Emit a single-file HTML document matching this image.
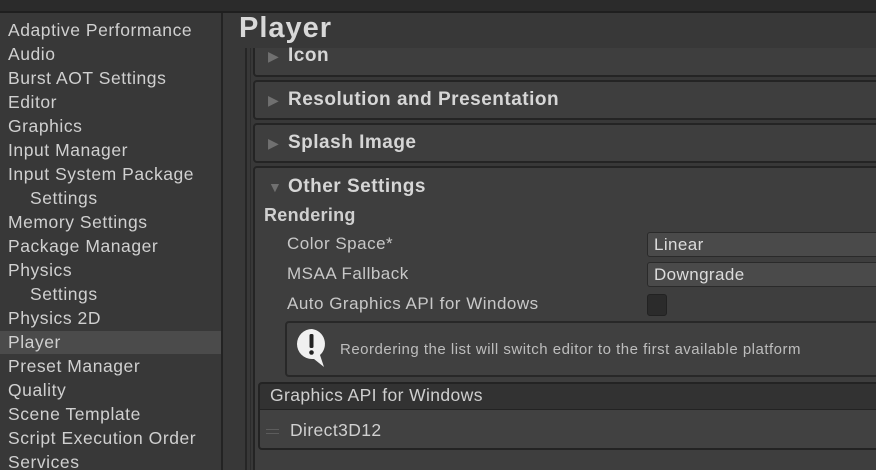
<!DOCTYPE html><html><head><style>
html,body{margin:0;width:876px;height:470px;overflow:hidden}
body{background:#383838;font-family:"Liberation Sans",sans-serif;color:#d2d2d2;position:relative}
.a{position:absolute}
.side div{position:absolute;left:8px;font-size:17.5px;letter-spacing:0.55px;color:#d0d0d0;white-space:nowrap}
.box{position:absolute;left:253px;width:640px;background:#3e3e3e;border:2px solid #242424;border-radius:4px;box-sizing:border-box}
.fh{position:absolute;left:268px;font-size:19px;letter-spacing:0.5px;font-weight:bold;color:#d6d6d6;white-space:nowrap}
.tri{color:#707070;font-size:14px;margin-right:7px;font-weight:normal;display:inline-block;width:13px}
.lbl{position:absolute;left:287px;font-size:17px;letter-spacing:0.5px;color:#c8c8c8;white-space:nowrap}
.dd{position:absolute;left:647px;width:240px;height:25px;background:#4a4a4a;border:1px solid #2a2a2a;border-radius:3px;font-size:17px;letter-spacing:0.4px;color:#dcdcdc;padding-left:6px;line-height:23px;box-sizing:border-box}
</style></head><body>
<div class="a" style="left:0;top:0;width:876px;height:11px;background:#2b2b2b;border-bottom:2px solid #1f1f1f"></div>
<div class="a" style="left:221px;top:13px;width:2px;height:457px;background:#232323"></div>
<div class="a" style="left:0;top:331px;width:221px;height:23px;background:#4b4b4b"></div>
<div class="side">
<div style="top:20px">Adaptive Performance</div>
<div style="top:44px">Audio</div>
<div style="top:68px">Burst AOT Settings</div>
<div style="top:92px">Editor</div>
<div style="top:116px">Graphics</div>
<div style="top:140px">Input Manager</div>
<div style="top:164px">Input System Package</div>
<div style="top:188px;left:30px">Settings</div>
<div style="top:212px">Memory Settings</div>
<div style="top:236px">Package Manager</div>
<div style="top:260px">Physics</div>
<div style="top:284px;left:30px">Settings</div>
<div style="top:308px">Physics 2D</div>
<div style="top:332px">Player</div>
<div style="top:356px">Preset Manager</div>
<div style="top:380px">Quality</div>
<div style="top:404px">Scene Template</div>
<div style="top:428px">Script Execution Order</div>
<div style="top:452px">Services</div>
</div>
<div class="a" style="left:245px;top:48px;width:2px;height:422px;background:#262626"></div>
<div class="a" style="left:250px;top:48px;width:1px;height:422px;background:#2c2c2c"></div>
<div class="box" style="top:30px;height:47px"></div>
<div class="box" style="top:80px;height:40px"></div>
<div class="box" style="top:123px;height:40px"></div>
<div class="box" style="top:166px;height:310px"></div>
<div class="a" style="left:224px;top:13px;width:660px;height:35px;background:#383838"></div>
<div class="a" style="left:239px;top:12px;font-size:29px;letter-spacing:1px;font-weight:bold;color:#d8d8d8">Player</div>
<div class="fh" style="top:45px"><span class="tri">▶</span>Icon</div>
<div class="fh" style="top:89px"><span class="tri">▶</span>Resolution and Presentation</div>
<div class="fh" style="top:132px"><span class="tri">▶</span>Splash Image</div>
<div class="fh" style="top:176px"><span class="tri">▼</span>Other Settings</div>
<div class="a" style="left:264px;top:205px;font-size:18px;letter-spacing:0.3px;font-weight:bold;color:#d0d0d0">Rendering</div>
<div class="lbl" style="top:234px">Color Space*</div>
<div class="lbl" style="top:264px">MSAA Fallback</div>
<div class="lbl" style="top:294px">Auto Graphics API for Windows</div>
<div class="dd" style="top:232px">Linear</div>
<div class="dd" style="top:262px">Downgrade</div>
<div class="a" style="left:647px;top:294px;width:18px;height:20px;background:#2b2b2b;border:1px solid #222;border-radius:3px"></div>
<div class="a" style="left:285px;top:321px;width:600px;height:56px;background:#404040;border:2px solid #282828;border-radius:4px;box-sizing:border-box"></div>
<svg class="a" style="left:292px;top:327px" width="40" height="46" viewBox="0 0 40 46"><path d="M20 2 A15 15 0 1 0 20 32 L22 32 L32 40 L28 28 A15 15 0 0 0 20 2Z" fill="#f0f0f0"/><rect x="17.5" y="7" width="4" height="14" rx="1.5" fill="#222"/><circle cx="19.5" cy="25.5" r="2.3" fill="#222"/></svg>
<div class="a" style="left:340px;top:341px;font-size:15px;letter-spacing:0.5px;color:#bdbdbd;white-space:nowrap">Reordering the list will switch editor to the first available platform</div>
<div class="a" style="left:258px;top:382px;width:630px;height:28px;background:#323232;border:2px solid #232323;border-bottom:1px solid #232323;border-radius:4px 4px 0 0;box-sizing:border-box"></div>
<div class="a" style="left:270px;top:385px;font-size:17.5px;letter-spacing:0.4px;color:#cfcfcf">Graphics API for Windows</div>
<div class="a" style="left:258px;top:410px;width:630px;height:40px;background:#414141;border:2px solid #232323;border-top:none;border-radius:0 0 4px 4px;box-sizing:border-box"></div>
<div class="a" style="left:266px;top:429px;width:13px;height:1px;background:#5c5c5c"></div>
<div class="a" style="left:266px;top:433px;width:13px;height:1px;background:#5c5c5c"></div>
<div class="a" style="left:290px;top:420px;font-size:17.5px;letter-spacing:0.4px;color:#d0d0d0">Direct3D12</div>
</body></html>
